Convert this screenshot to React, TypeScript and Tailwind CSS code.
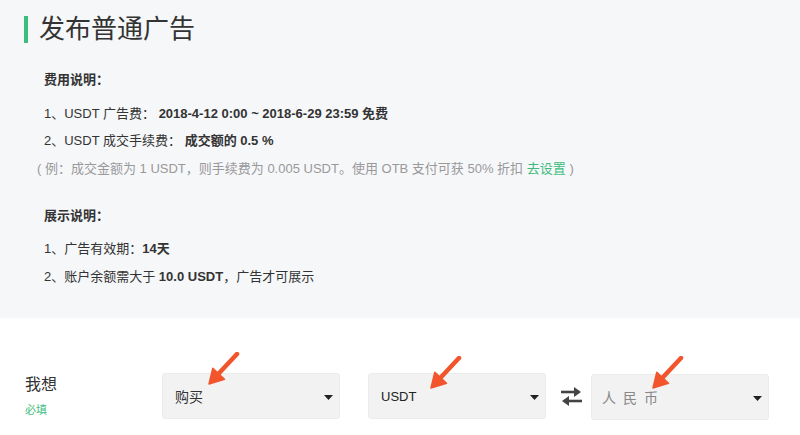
import React from "react";

const font = "font-['Liberation_Sans','Noto_Sans_CJK_SC',sans-serif]";

function Caret() {
  return (
    <svg width="9" height="5" viewBox="0 0 9 5" className="absolute right-[6px] top-[21px]">
      <path d="M0 0 L9 0 L4.5 5 Z" fill="#222" />
    </svg>
  );
}

function RedArrow({ className }: { className: string }) {
  return (
    <svg width="34" height="34" viewBox="0 0 34 34" className={`absolute ${className}`}>
      <path d="M30 2 L11.5 21.8" stroke="#f2552c" strokeWidth="4.5" strokeLinecap="round" />
      <path d="M2 32 L17.5 27.2 L5.8 16.2 Z" fill="#f2552c" stroke="#f2552c" strokeWidth="1.5" strokeLinejoin="round" />
    </svg>
  );
}

function Select({
  children,
  arrow,
  className = "",
}: {
  children: React.ReactNode;
  arrow: string;
  className?: string;
}) {
  return (
    <div
      className={`relative w-[178px] h-[46px] bg-[#f2f2f2] border border-[#ececec] rounded-[3px] pl-[12px] pt-[2px] flex items-center ${className}`}
    >
      {children}
      <Caret />
      <RedArrow className={arrow} />
    </div>
  );
}

export default function App() {
  return (
    <div className={`w-[800px] h-[435px] bg-white overflow-hidden ${font}`}>
      <div className="bg-[#f6f7f9] h-[318px] pt-[14px]">
        <div className="flex items-center pl-[24px]">
          <div className="w-[4px] h-[27px] bg-[#3dbd7d]" />
          <h1 className="ml-[11px] text-[26px] leading-[30px] text-[#333]">发布普通广告</h1>
        </div>

        <div className="pl-[44px] text-[13px] leading-[20px] text-[#333] flex flex-col">
          <p className="mt-[26px] font-bold">费用说明：</p>
          <p className="mt-[14px]">
            1、USDT 广告费：{" "}
            <span className="font-bold">2018-4-12 0:00 ~ 2018-6-29 23:59 免费</span>
          </p>
          <p className="mt-[7px]">
            2、USDT 成交手续费：{" "}
            <span className="font-bold">成交额的 0.5 %</span>
          </p>
          <p className="mt-[8px] -ml-[7px] text-[#999]">
            ( 例：成交金额为 1 USDT，则手续费为 0.005 USDT。使用 OTB 支付可获 50% 折扣{" "}
            <span className="text-[#3dbd7d]">去设置</span> )
          </p>
          <p className="mt-[27px] font-bold">展示说明：</p>
          <p className="mt-[13px]">
            1、广告有效期：<span className="font-bold">14天</span>
          </p>
          <p className="mt-[8px]">
            2、账户余额需大于 <span className="font-bold">10.0 USDT</span>，广告才可展示
          </p>
        </div>
      </div>

      <div className="flex items-start pl-[25px] pt-[55px]">
        <div className="w-[137px] mt-[1px] flex flex-col">
          <span className="text-[16px] leading-[22px] text-[#333]">我想</span>
          <span className="mt-[7px] text-[11px] leading-[14px] text-[#3dbd7d]">必填</span>
        </div>

        <Select arrow="left-[44px] top-[-22px]">
          <span className="text-[14px] text-[#333]">购买</span>
        </Select>

        <Select arrow="left-[60px] top-[-18px]" className="ml-[28px]">
          <span className="text-[13px] text-[#222]">USDT</span>
        </Select>

        <div className="ml-[14px] mr-[8px] h-[46px] flex items-center">
          <svg width="23" height="20" viewBox="0 0 23 20">
            <path d="M1 6 H19" stroke="#444" strokeWidth="2.6" />
            <path d="M14 1 L21 6 L14 11 Z" fill="#444" />
            <path d="M4 15 H22" stroke="#444" strokeWidth="2.6" />
            <path d="M9 10 L2 15 L9 20 Z" fill="#444" />
          </svg>
        </div>

        <Select arrow="left-[59px] top-[-19px]" className="mt-[1px] h-[44px]">
          <span className="text-[14px] tracking-[7px] text-[#888] -ml-[2px]">人民币</span>
        </Select>
      </div>
    </div>
  );
}
